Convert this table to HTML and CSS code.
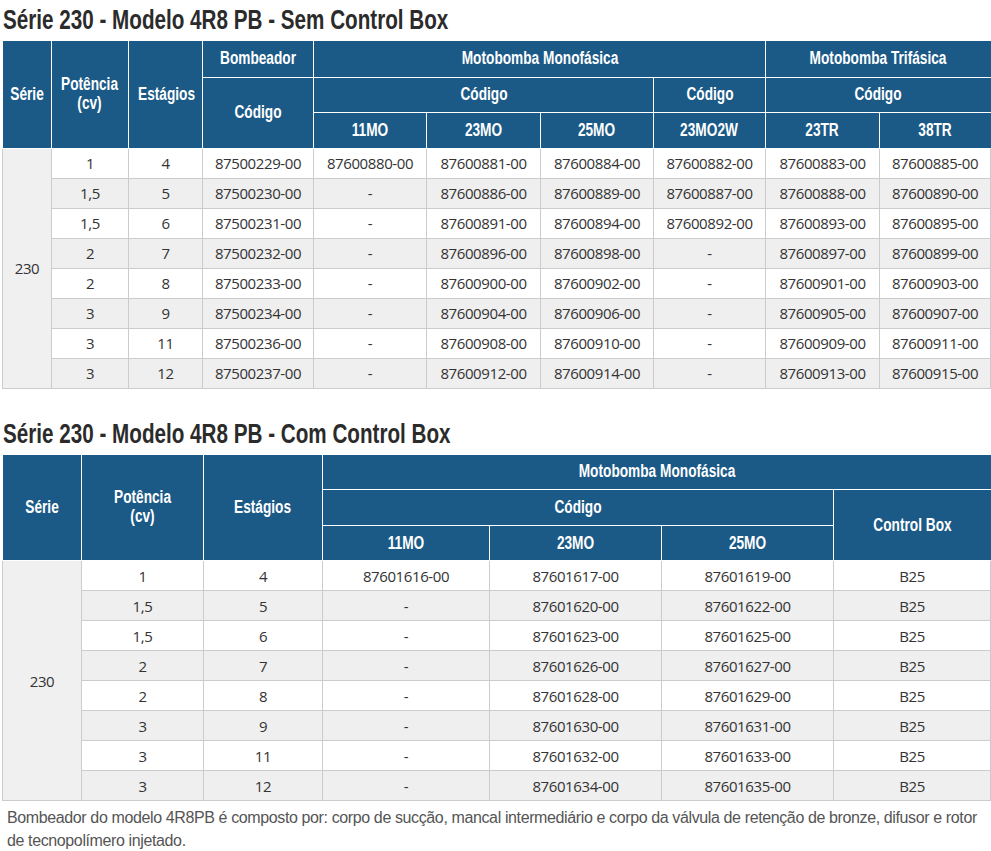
FILE: index.html
```html
<!DOCTYPE html>
<html lang="pt">
<head>
<meta charset="utf-8">
<title>Série 230 - Modelo 4R8 PB</title>
<link rel="stylesheet" href="styles.css">
</head>
<body>
<h2 class="title"><span class="cond">Série 230 - Modelo 4R8 PB - Sem Control Box</span></h2>
<table class="spec spec-a">
  <colgroup>
    <col class="w49"><col class="w77"><col class="w74"><col class="w111"><col class="w113"><col class="w114"><col class="w113"><col class="w112"><col class="w114"><col class="w111">
  </colgroup>
  <thead>
    <tr class="h36">
      <th rowspan="3"><span class="hl">Série</span></th>
      <th rowspan="3"><span class="hl">Potência<br>(cv)</span></th>
      <th rowspan="3"><span class="hl">Estágios</span></th>
      <th><span class="hl">Bombeador</span></th>
      <th colspan="4"><span class="hl">Motobomba Monofásica</span></th>
      <th colspan="2"><span class="hl">Motobomba Trifásica</span></th>
    </tr>
    <tr class="h35">
      <th rowspan="2"><span class="hl">Código</span></th>
      <th colspan="3"><span class="hl">Código</span></th>
      <th><span class="hl">Código</span></th>
      <th colspan="2"><span class="hl">Código</span></th>
    </tr>
    <tr class="h36">
      <th><span class="hl">11MO</span></th><th><span class="hl">23MO</span></th><th><span class="hl">25MO</span></th><th><span class="hl">23MO2W</span></th><th><span class="hl">23TR</span></th><th><span class="hl">38TR</span></th>
    </tr>
  </thead>
  <tbody>
    <tr><td rowspan="8" class="serie">230</td><td>1</td><td>4</td><td>87500229-00</td><td>87600880-00</td><td>87600881-00</td><td>87600884-00</td><td>87600882-00</td><td>87600883-00</td><td>87600885-00</td></tr>
    <tr><td>1,5</td><td>5</td><td>87500230-00</td><td>-</td><td>87600886-00</td><td>87600889-00</td><td>87600887-00</td><td>87600888-00</td><td>87600890-00</td></tr>
    <tr><td>1,5</td><td>6</td><td>87500231-00</td><td>-</td><td>87600891-00</td><td>87600894-00</td><td>87600892-00</td><td>87600893-00</td><td>87600895-00</td></tr>
    <tr><td>2</td><td>7</td><td>87500232-00</td><td>-</td><td>87600896-00</td><td>87600898-00</td><td>-</td><td>87600897-00</td><td>87600899-00</td></tr>
    <tr><td>2</td><td>8</td><td>87500233-00</td><td>-</td><td>87600900-00</td><td>87600902-00</td><td>-</td><td>87600901-00</td><td>87600903-00</td></tr>
    <tr><td>3</td><td>9</td><td>87500234-00</td><td>-</td><td>87600904-00</td><td>87600906-00</td><td>-</td><td>87600905-00</td><td>87600907-00</td></tr>
    <tr><td>3</td><td>11</td><td>87500236-00</td><td>-</td><td>87600908-00</td><td>87600910-00</td><td>-</td><td>87600909-00</td><td>87600911-00</td></tr>
    <tr><td>3</td><td>12</td><td>87500237-00</td><td>-</td><td>87600912-00</td><td>87600914-00</td><td>-</td><td>87600913-00</td><td>87600915-00</td></tr>
  </tbody>
</table>

<h2 class="title title-second"><span class="cond">Série 230 - Modelo 4R8 PB - Com Control Box</span></h2>
<table class="spec spec-b">
  <colgroup>
    <col class="w79"><col class="w122"><col class="w119"><col class="w167"><col class="w172"><col class="w172"><col class="w157">
  </colgroup>
  <thead>
    <tr class="h35">
      <th rowspan="3"><span class="hl">Série</span></th>
      <th rowspan="3"><span class="hl">Potência<br>(cv)</span></th>
      <th rowspan="3"><span class="hl">Estágios</span></th>
      <th colspan="4"><span class="hl">Motobomba Monofásica</span></th>
    </tr>
    <tr class="h36">
      <th colspan="3"><span class="hl">Código</span></th>
      <th rowspan="2"><span class="hl">Control Box</span></th>
    </tr>
    <tr class="h35">
      <th><span class="hl">11MO</span></th><th><span class="hl">23MO</span></th><th><span class="hl">25MO</span></th>
    </tr>
  </thead>
  <tbody>
    <tr><td rowspan="8" class="serie">230</td><td>1</td><td>4</td><td>87601616-00</td><td>87601617-00</td><td>87601619-00</td><td>B25</td></tr>
    <tr><td>1,5</td><td>5</td><td>-</td><td>87601620-00</td><td>87601622-00</td><td>B25</td></tr>
    <tr><td>1,5</td><td>6</td><td>-</td><td>87601623-00</td><td>87601625-00</td><td>B25</td></tr>
    <tr><td>2</td><td>7</td><td>-</td><td>87601626-00</td><td>87601627-00</td><td>B25</td></tr>
    <tr><td>2</td><td>8</td><td>-</td><td>87601628-00</td><td>87601629-00</td><td>B25</td></tr>
    <tr><td>3</td><td>9</td><td>-</td><td>87601630-00</td><td>87601631-00</td><td>B25</td></tr>
    <tr><td>3</td><td>11</td><td>-</td><td>87601632-00</td><td>87601633-00</td><td>B25</td></tr>
    <tr><td>3</td><td>12</td><td>-</td><td>87601634-00</td><td>87601635-00</td><td>B25</td></tr>
  </tbody>
</table>
<p class="note">Bombeador do modelo 4R8PB é composto por: corpo de sucção, mancal intermediário e corpo da válvula de retenção de bronze, difusor e rotor de tecnopolímero injetado.</p>
</body>
</html>
```

FILE: styles.css
```css
html, body {
  margin: 0;
  padding: 0;
  background: #ffffff;
}
body {
  padding: 0 1px 0 2px;
  font-family: "Open Sans", "Liberation Sans", sans-serif;
  color: #333333;
}
.title {
  margin: 0;
  height: 41px;
  line-height: 40px;
  padding-left: 1px;
  font-family: "Liberation Sans", Arial, sans-serif;
  font-weight: bold;
  font-size: 27px;
  color: #2b2b2b;
  white-space: nowrap;
}
.cond {
  display: inline-block;
  transform: scaleX(0.765);
  transform-origin: left center;
}
.title-second {
  margin-top: 25px;
}
.spec {
  border-collapse: collapse;
  table-layout: fixed;
  width: 988px;
}
.w49 { width: 49px; }
.w77 { width: 77px; }
.w74 { width: 74px; }
.w111 { width: 111px; }
.w112 { width: 112px; }
.w113 { width: 113px; }
.w114 { width: 114px; }
.w79 { width: 79px; }
.w122 { width: 122px; }
.w119 { width: 119px; }
.w167 { width: 167px; }
.w172 { width: 172px; }
.w157 { width: 157px; }
.spec th {
  background: #1b5a87;
  color: #ffffff;
  border: 1px solid #ffffff;
  font-family: "Liberation Sans", Arial, sans-serif;
  font-weight: bold;
  font-size: 18px;
  line-height: 19px;
  padding: 0;
  text-align: center;
  vertical-align: middle;
  white-space: nowrap;
}
.hl {
  display: inline-block;
  transform: scaleX(0.76);
  transform-origin: center center;
}
.spec thead tr:first-child th {
  border-top: 0;
}
.spec th:first-child {
  border-left: 0;
}
.spec thead tr th:last-child {
  border-right: 0;
}
.h35 { height: 35px; }
.h36 { height: 36px; }
.spec td {
  height: 29px;
  padding: 0;
  border: 1px solid #cccccc;
  text-align: center;
  vertical-align: middle;
  font-size: 15px;
  letter-spacing: -0.4px;
  color: #333333;
}
.spec tbody tr:nth-child(even) td {
  background: #efefef;
}
.spec td.serie {
  background: #f0f0f0;
}
.note {
  margin: 0;
  padding: 5px 0 0 5px;
  font-family: "Liberation Sans", Arial, sans-serif;
  font-size: 16px;
  letter-spacing: -0.38px;
  line-height: 23px;
  color: #555555;
}
```
